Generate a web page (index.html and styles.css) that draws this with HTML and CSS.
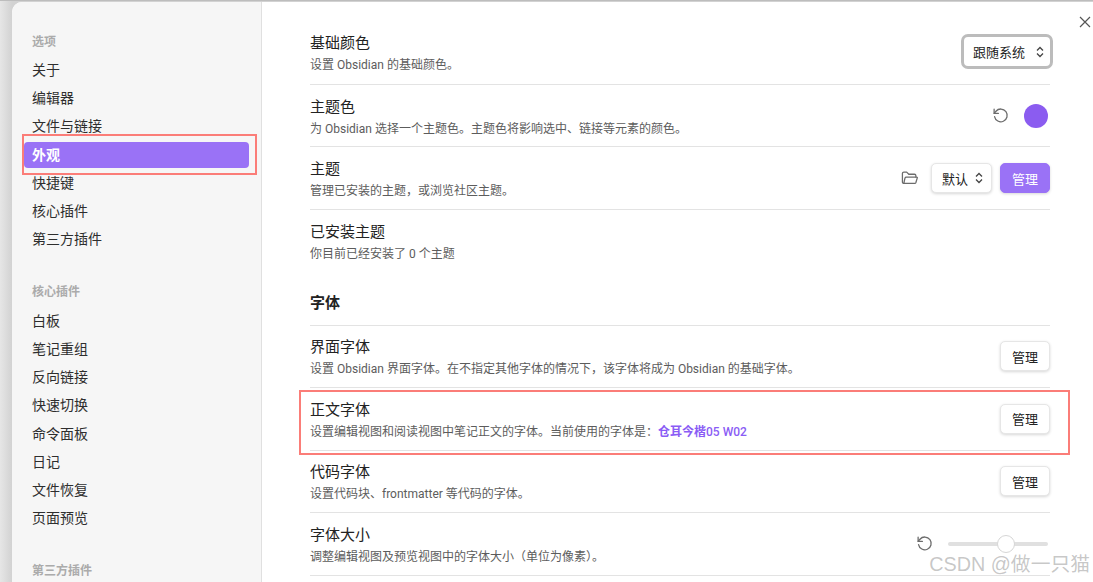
FILE: index.html
```html
<!DOCTYPE html>
<html lang="zh-CN">
<head>
<meta charset="utf-8">
<title>设置 - 外观</title>
<link rel="stylesheet" href="styles.css">
</head>
<body>
<div class="window">
  <aside class="sidebar">
    <div class="nav-title">选项</div>
    <div class="nav-item">关于</div>
    <div class="nav-item">编辑器</div>
    <div class="nav-item">文件与链接</div>
    <div class="nav-item active">外观</div>
    <div class="nav-item">快捷键</div>
    <div class="nav-item">核心插件</div>
    <div class="nav-item">第三方插件</div>
    <div class="nav-title second">核心插件</div>
    <div class="nav-item">白板</div>
    <div class="nav-item">笔记重组</div>
    <div class="nav-item">反向链接</div>
    <div class="nav-item">快速切换</div>
    <div class="nav-item">命令面板</div>
    <div class="nav-item">日记</div>
    <div class="nav-item">文件恢复</div>
    <div class="nav-item">页面预览</div>
    <div class="nav-title third">第三方插件</div>
  </aside>
  <main class="content">
    <section class="row first">
      <div class="info"><div class="name">基础颜色</div><div class="desc">设置 Obsidian 的基础颜色。</div></div>
      <div class="controls">
        <div class="select focused">跟随系统<svg class="updown" viewBox="0 0 8 12"><path d="M1 4.500 4 1.500 7 4.500M1 7.500 4 10.500 7 7.500"/></svg></div>
      </div>
    </section>
    <section class="row">
      <div class="info"><div class="name">主题色</div><div class="desc">为 Obsidian 选择一个主题色。主题色将影响选中、链接等元素的颜色。</div></div>
      <div class="controls gap-lg">
        <svg class="icon" viewBox="0 0 24 24"><path d="M3 3v6h6"/><path d="M3.600 13.500A9 9 0 1 0 5.600 6L3 9"/></svg>
        <div class="swatch"></div>
      </div>
    </section>
    <section class="row">
      <div class="info"><div class="name">主题</div><div class="desc">管理已安装的主题，或浏览社区主题。</div></div>
      <div class="controls">
        <svg class="icon folder" viewBox="0 0 24 24"><path d="M4 19a2 2 0 0 1-2-2V5a2 2 0 0 1 2-2h4l3 3h8a2 2 0 0 1 2 2v2"/><path d="M4 19h15.500a1.500 1.500 0 0 0 1.400-1l2-6.500a1 1 0 0 0-1-1.500H7.500a2 2 0 0 0-1.900 1.400L4 19Z"/></svg>
        <div class="select">默认<svg class="updown" viewBox="0 0 8 12"><path d="M1 4.500 4 1.500 7 4.500M1 7.500 4 10.500 7 7.500"/></svg></div>
        <button class="btn primary">管理</button>
      </div>
    </section>
    <section class="row plain">
      <div class="info"><div class="name">已安装主题</div><div class="desc">你目前已经安装了 0 个主题</div></div>
    </section>
    <h2 class="group">字体</h2>
    <section class="row">
      <div class="info"><div class="name">界面字体</div><div class="desc">设置 Obsidian 界面字体。在不指定其他字体的情况下，该字体将成为 Obsidian 的基础字体。</div></div>
      <div class="controls"><button class="btn">管理</button></div>
    </section>
    <section class="row">
      <div class="info"><div class="name">正文字体</div><div class="desc">设置编辑视图和阅读视图中笔记正文的字体。当前使用的字体是：<strong class="accent">仓耳今楷</strong><span class="accent-latin">05 W02</span></div></div>
      <div class="controls"><button class="btn">管理</button></div>
    </section>
    <section class="row">
      <div class="info"><div class="name">代码字体</div><div class="desc">设置代码块、frontmatter 等代码的字体。</div></div>
      <div class="controls"><button class="btn">管理</button></div>
    </section>
    <section class="row">
      <div class="info"><div class="name">字体大小</div><div class="desc">调整编辑视图及预览视图中的字体大小（单位为像素）。</div></div>
      <div class="controls slider-wrap">
        <svg class="icon" viewBox="0 0 24 24"><path d="M3 3v6h6"/><path d="M3.600 13.500A9 9 0 1 0 5.600 6L3 9"/></svg>
        <div class="slider"><div class="thumb"></div></div>
      </div>
    </section>
  </main>
  <svg class="close" viewBox="0 0 12 12"><path d="M1 1 11 11M11 1 1 11"/></svg>
</div>
<div class="mark mark-nav"></div>
<div class="mark mark-row"></div>
<div class="watermark">CSDN @做一只猫</div>
</body>
</html>
```
FILE: styles.css
```css
* { box-sizing: border-box; }
html, body { margin: 0; height: 582px; overflow: hidden; }
body {
  position: relative;
  background: linear-gradient(90deg, #e6e6e6 0, #d2d2d2 12px);
  padding: 1px 0 0 12px;
  border-top: 1px solid #bdbdbd;
  font-family: "Roboto", "Noto Sans CJK SC", sans-serif;
  color: #222;
}
.window {
  display: flex;
  position: relative;
  height: 600px;
  background: #fff;
  border-radius: 10px 0 0 0;
  overflow: hidden;
}
.sidebar {
  width: 250px;
  flex: none;
  background: #f6f6f6;
  border-right: 1px solid #e0e0e0;
  padding: 30px 12px 0;
}
.nav-title {
  height: 20px;
  line-height: 20px;
  padding-left: 8px;
  font-size: 12px;
  font-weight: 700;
  color: #ababab;
  margin-bottom: 5px;
}
.nav-title.second { margin-top: 30px; margin-bottom: 5.800px; }
.nav-title.third { margin-top: 30.200px; }
.nav-item {
  height: 26px;
  margin-bottom: 2.200px;
  line-height: 26px;
  padding-left: 8px;
  font-size: 14px;
  color: #2e2e2e;
  border-radius: 4px;
}
.nav-item.active { background: #9a72f6; color: #fff; font-weight: 700; }
.content { flex: 1; padding: 10px 43px 0 48px; min-width: 0; }
.row {
  display: flex;
  align-items: center;
  justify-content: space-between;
  height: 62.500px;
  border-bottom: 1px solid #e3e3e3;
}
.row.first { height: 72.800px; padding-top: 8px; }
.row.plain { border-bottom: 0; }
.info { padding-top: 3px; }
.name { font-size: 15px; line-height: 20px; color: #222; }
.desc { font-size: 12px; line-height: 17px; margin-top: 4px; color: #5c5c5c; white-space: nowrap; }
.accent { color: #8a5cf5; font-weight: 700; }
.accent-latin { color: #8a5cf5; font-weight: 500; }
.controls { display: flex; align-items: center; gap: 8px; flex: none; }
.gap-lg { gap: 15px; margin-right: 2px; }
.select {
  display: flex;
  align-items: center;
  justify-content: space-between;
  width: 61px;
  height: 30px;
  padding: 0 8px 0 10px;
  font-size: 13px;
  background: #fff;
  border: 1px solid #e6e6e6;
  border-radius: 5px;
  box-shadow: 0 1px 3px rgba(0,0,0,.16);
}
.select.focused {
  width: 92px;
  height: 35px;
  padding: 0 6px 0 9px;
  border: 3px solid #bcbcbc;
  box-shadow: none;
  border-radius: 7px;
  margin-right: -3px;
}
.updown { width: 8px; height: 12px; fill: none; stroke: #444; stroke-width: 1.300; }
.icon { width: 17px; height: 17px; fill: none; stroke: #6c6c6c; stroke-width: 1.800; stroke-linecap: round; stroke-linejoin: round; }
.icon.folder { margin-right: 5px; }
.swatch { width: 24px; height: 24px; border-radius: 50%; background: #8b5cf0; }
.btn {
  width: 50px;
  height: 30px;
  padding: 0;
  border: 1px solid #e6e6e6;
  border-radius: 5px;
  background: #fff;
  font: inherit;
  font-size: 13px;
  color: #222;
  box-shadow: 0 1px 3px rgba(0,0,0,.16);
}
.btn.primary { background: #9a72f6; border-color: #9a72f6; color: #fff; }
.group {
  margin: 0;
  height: 53.400px;
  padding-top: 21px;
  line-height: 20px;
  font-size: 15px;
  font-weight: 700;
  color: #222;
  border-bottom: 1px solid #e3e3e3;
}
.slider-wrap { gap: 15px; margin-right: 2px; }
.slider { position: relative; width: 100px; height: 4px; background: #e0e0e0; border-radius: 2px; }
.thumb {
  position: absolute;
  left: 49px;
  top: -7px;
  width: 18px;
  height: 18px;
  border-radius: 50%;
  background: #fff;
  border: 1px solid #d6d6d6;
}
.close {
  position: absolute;
  top: 14px;
  right: 2px;
  width: 12px;
  height: 12px;
  fill: none;
  stroke: #555;
  stroke-width: 1.200;
}
.mark {
  position: absolute;
  border: 2px solid #fb7d78;
  pointer-events: none;
}
.mark-nav { left: 22px; top: 133px; width: 235px; height: 41px; }
.mark-row { left: 299px; top: 389px; width: 771px; height: 65px; }
.watermark {
  position: absolute;
  right: 3px;
  top: 551px;
  font-family: "Liberation Sans", "Noto Sans CJK SC", sans-serif;
  font-size: 19.800px;
  line-height: 24px;
  color: rgba(120,120,120,.42);
  white-space: nowrap;
}
```
